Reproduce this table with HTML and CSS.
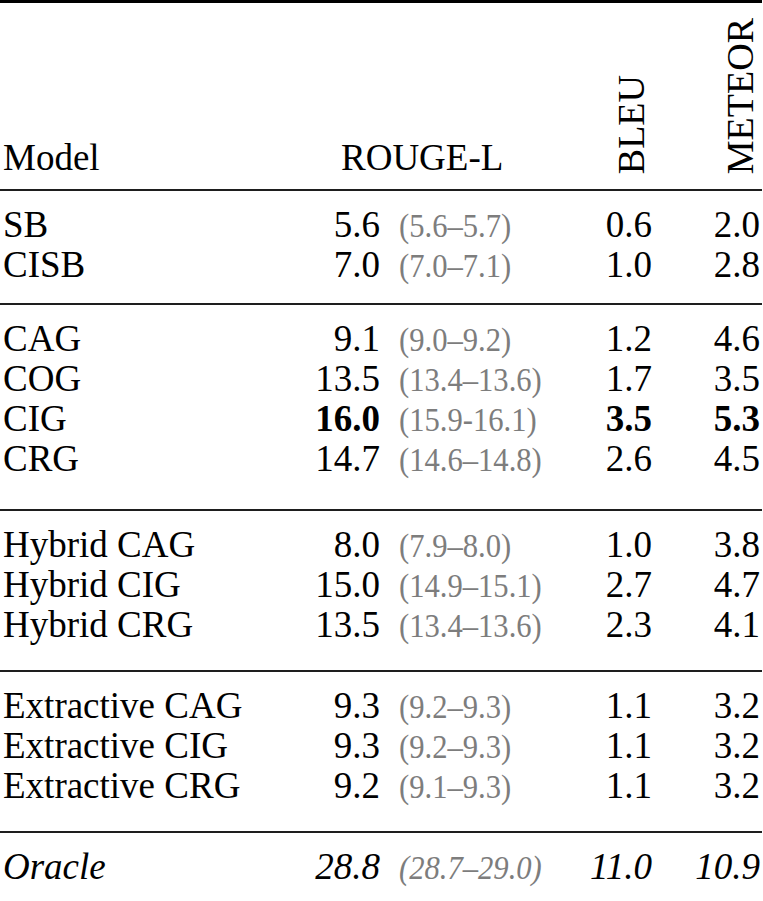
FILE: index.html
```html
<!DOCTYPE html>
<html lang="en">
<head>
<meta charset="utf-8">
<title>Results</title>
<link rel="stylesheet" href="styles.css">
</head>
<body>
<table class="results">
  <colgroup>
    <col class="c-model"><col class="c-val"><col class="c-rng"><col class="c-bleu"><col class="c-met">
  </colgroup>
  <thead>
    <tr>
      <th class="h-model">Model</th>
      <th class="h-rouge" colspan="2">ROUGE-L</th>
      <th class="h-rot h-bleu"><span>BLEU</span></th>
      <th class="h-rot h-last"><span>METEOR</span></th>
    </tr>
  </thead>
  <tbody class="g-baseline">
    <tr><td class="m">SB</td><td class="v">5.6</td><td class="r"><span class="rng">(5.6–5.7)</span></td><td class="b">0.6</td><td class="t">2.0</td></tr>
    <tr><td class="m">CISB</td><td class="v">7.0</td><td class="r"><span class="rng">(7.0–7.1)</span></td><td class="b">1.0</td><td class="t">2.8</td></tr>
  </tbody>
  <tbody class="g-core">
    <tr><td class="m">CAG</td><td class="v">9.1</td><td class="r"><span class="rng">(9.0–9.2)</span></td><td class="b">1.2</td><td class="t">4.6</td></tr>
    <tr><td class="m">COG</td><td class="v">13.5</td><td class="r"><span class="rng">(13.4–13.6)</span></td><td class="b">1.7</td><td class="t">3.5</td></tr>
    <tr><td class="m">CIG</td><td class="v"><strong>16.0</strong></td><td class="r"><span class="rng">(15.9-16.1)</span></td><td class="b"><strong>3.5</strong></td><td class="t"><strong>5.3</strong></td></tr>
    <tr><td class="m">CRG</td><td class="v">14.7</td><td class="r"><span class="rng">(14.6–14.8)</span></td><td class="b">2.6</td><td class="t">4.5</td></tr>
  </tbody>
  <tbody>
    <tr><td class="m">Hybrid CAG</td><td class="v">8.0</td><td class="r"><span class="rng">(7.9–8.0)</span></td><td class="b">1.0</td><td class="t">3.8</td></tr>
    <tr><td class="m">Hybrid CIG</td><td class="v">15.0</td><td class="r"><span class="rng">(14.9–15.1)</span></td><td class="b">2.7</td><td class="t">4.7</td></tr>
    <tr><td class="m">Hybrid CRG</td><td class="v">13.5</td><td class="r"><span class="rng">(13.4–13.6)</span></td><td class="b">2.3</td><td class="t">4.1</td></tr>
  </tbody>
  <tbody>
    <tr><td class="m">Extractive CAG</td><td class="v">9.3</td><td class="r"><span class="rng">(9.2–9.3)</span></td><td class="b">1.1</td><td class="t">3.2</td></tr>
    <tr><td class="m">Extractive CIG</td><td class="v">9.3</td><td class="r"><span class="rng">(9.2–9.3)</span></td><td class="b">1.1</td><td class="t">3.2</td></tr>
    <tr><td class="m">Extractive CRG</td><td class="v">9.2</td><td class="r"><span class="rng">(9.1–9.3)</span></td><td class="b">1.1</td><td class="t">3.2</td></tr>
  </tbody>
  <tbody class="oracle">
    <tr><td class="m">Oracle</td><td class="v">28.8</td><td class="r"><span class="rng">(28.7–29.0)</span></td><td class="b">11.0</td><td class="t">10.9</td></tr>
  </tbody>
</table>
</body>
</html>
```

FILE: styles.css
```css
html, body {
  margin: 0;
  padding: 0;
  background: #ffffff;
  overflow: hidden;
}

.results {
  border-collapse: separate;
  border-spacing: 0;
  table-layout: fixed;
  width: 762px;
  font-family: "Liberation Serif", "Times New Roman", serif;
  font-size: 37px;
  color: #000;
}

.c-model { width: 300px; }
.c-val { width: 81px; }
.c-rng { width: 179px; }
.c-bleu { width: 92px; }
.c-met { width: 110px; }

.results th,
.results td {
  padding: 0;
  line-height: 40px;
  font-weight: normal;
  white-space: nowrap;
}

.results thead th {
  box-sizing: border-box;
  height: 191px;
  border-top: 3px solid #000;
  border-bottom: 2px solid #1e1e1e;
  vertical-align: bottom;
  padding-bottom: 11px;
}

.results thead th.h-model {
  text-align: left;
  padding-left: 3px;
}

.results thead th.h-rouge {
  text-align: left;
  padding-left: 41px;
}

.results thead th.h-rot {
  text-align: right;
  line-height: 0;
  padding-bottom: 15px;
}

.h-rot span {
  display: inline-block;
  writing-mode: vertical-rl;
  transform: rotate(180deg);
  font-size: 38px;
  line-height: 33px;
  vertical-align: bottom;
}

.h-bleu span {
  margin-right: 4px;
}

.results thead th.h-last {
  padding-right: 2px;
}

.h-last span {
  margin-right: 3px;
}

.results td.m {
  text-align: left;
  padding-left: 3px;
}

.results td.v {
  text-align: right;
  padding-right: 1px;
}

.results td.r {
  text-align: left;
  padding-left: 18px;
}

.rng {
  display: inline-block;
  font-size: 34px;
  line-height: 1;
  color: #7d7d7d;
  transform: scaleX(0.9);
  transform-origin: left center;
}

.results td.b {
  text-align: right;
}

.results td.t {
  text-align: right;
  padding-right: 2px;
}

.results strong {
  font-weight: bold;
}

.results tbody tr:first-child td {
  padding-top: 14px;
}

.results tbody tr:last-child td {
  padding-bottom: 25px;
}

.results tbody.g-baseline tr:last-child td {
  padding-bottom: 18px;
}

.results tbody.g-core tr:last-child td {
  padding-bottom: 30px;
}

.results tbody + tbody tr:first-child td {
  border-top: 2px solid #1e1e1e;
}

.results tbody.oracle td {
  font-style: italic;
  padding-top: 11px;
  padding-bottom: 13px;
  border-bottom: 3px solid #000;
}
```
